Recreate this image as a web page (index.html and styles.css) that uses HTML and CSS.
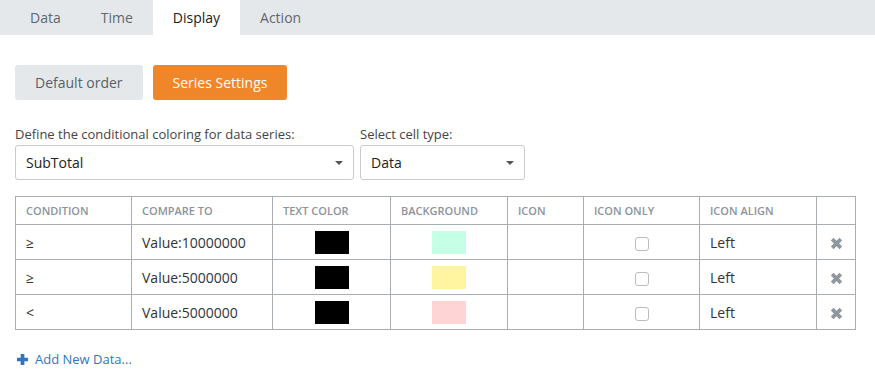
FILE: index.html
```html
<!DOCTYPE html>
<html>
<head>
<meta charset="utf-8">
<link rel="stylesheet" href="styles.css">
</head>
<body>
<div class="tabs">
  <div class="tab">Data</div>
  <div class="tab">Time</div>
  <div class="tab active">Display</div>
  <div class="tab">Action</div>
</div>
<div class="content">
  <div class="btns">
    <button class="btn">Default order</button>
    <button class="btn primary">Series Settings</button>
  </div>
  <div class="fields">
    <div class="field f1">
      <div class="label">Define the conditional coloring for data series:</div>
      <div class="select"><span>SubTotal</span><i class="caret"></i></div>
    </div>
    <div class="field f2">
      <div class="label">Select cell type:</div>
      <div class="select"><span>Data</span><i class="caret"></i></div>
    </div>
  </div>
  <table class="grid">
    <colgroup>
      <col style="width:116px"><col style="width:141px"><col style="width:118px"><col style="width:117px"><col style="width:76px"><col style="width:116px"><col style="width:117px"><col style="width:39px">
    </colgroup>
    <thead>
      <tr><th>Condition</th><th>Compare To</th><th>Text Color</th><th>Background</th><th>Icon</th><th>Icon Only</th><th>Icon Align</th><th></th></tr>
    </thead>
    <tbody>
      <tr><td>≥</td><td>Value:10000000</td><td class="c"><span class="sw black"></span></td><td class="c"><span class="sw mint"></span></td><td></td><td class="c"><span class="cb"></span></td><td>Left</td><td class="c"><svg class="x" viewBox="0 0 12 12" width="13" height="13"><path d="M2 2L10 10M10 2L2 10" stroke="#8e979f" stroke-width="3.4"/></svg></td></tr>
      <tr><td>≥</td><td>Value:5000000</td><td class="c"><span class="sw black"></span></td><td class="c"><span class="sw yellow"></span></td><td></td><td class="c"><span class="cb"></span></td><td>Left</td><td class="c"><svg class="x" viewBox="0 0 12 12" width="13" height="13"><path d="M2 2L10 10M10 2L2 10" stroke="#8e979f" stroke-width="3.4"/></svg></td></tr>
      <tr><td>&lt;</td><td>Value:5000000</td><td class="c"><span class="sw black"></span></td><td class="c"><span class="sw pink"></span></td><td></td><td class="c"><span class="cb"></span></td><td>Left</td><td class="c"><svg class="x" viewBox="0 0 12 12" width="13" height="13"><path d="M2 2L10 10M10 2L2 10" stroke="#8e979f" stroke-width="3.4"/></svg></td></tr>
    </tbody>
  </table>
  <div class="add">
    <svg viewBox="0 0 14 14" width="13" height="13"><path d="M7 1V13M1 7H13" stroke="#2f76c2" stroke-width="4"/></svg>
    <span>Add New Data...</span>
  </div>
</div>
</body>
</html>
```

FILE: styles.css
```css
* { box-sizing: border-box; }
body {
  margin: 0;
  font-family: "Open Sans", "Liberation Sans", sans-serif;
  color: #333;
  background: #fff;
  width: 875px;
  height: 379px;
  overflow: hidden;
}
.tabs {
  display: flex;
  height: 35px;
  background: #e5e8eb;
  padding-left: 10px;
}
.tab {
  padding: 0 20px;
  line-height: 35px;
  font-size: 14px;
  color: #5f6770;
}
.tab.active {
  background: #fff;
  color: #1a1a1a;
}
.content {
  padding: 30px 15px 0 15px;
}
.btns {
  display: flex;
  gap: 10px;
}
.btn {
  height: 35px;
  padding: 0 20px;
  border: none;
  border-radius: 3px;
  font-family: inherit;
  font-size: 14px;
  background: #e5e8eb;
  color: #5a5f66;
}
.btn.primary {
  background: #f0862a;
  color: #fff;
}
.fields {
  display: flex;
  gap: 6px;
  margin-top: 25px;
}
.label {
  font-size: 13px;
  color: #444;
  line-height: 18px;
  margin-bottom: 2px;
}
.f1 { width: 339px; }
.f2 { width: 165px; }
.select {
  height: 35px;
  border: 1px solid #c8cbcf;
  border-radius: 3px;
  display: flex;
  align-items: center;
  justify-content: space-between;
  padding: 0 10px 0 10px;
  font-size: 14px;
  color: #222;
}
.caret {
  width: 0;
  height: 0;
  border-left: 4px solid transparent;
  border-right: 4px solid transparent;
  border-top: 4px solid #555;
}
.grid {
  margin-top: 16px;
  border-collapse: collapse;
  table-layout: fixed;
  width: 840px;
}
.grid th, .grid td {
  border: 1px solid #a9aeb3;
  text-align: left;
  padding: 0 0 0 10px;
}
.grid th {
  height: 28px;
  font-size: 11px;
  font-weight: 600;
  text-transform: uppercase;
  color: #8b949c;
}
.grid td {
  height: 35px;
  font-size: 14px;
  color: #333;
}
.grid td.c {
  text-align: center;
  padding: 0;
}
.sw {
  display: inline-block;
  width: 34px;
  height: 23px;
  vertical-align: middle;
}
.black { background: #000; }
.mint { background: #c4ffe6; }
.yellow { background: #fff5a0; }
.pink { background: #ffd4d4; }
.cb {
  display: inline-block;
  width: 14px;
  height: 14px;
  border: 1px solid #b9bdc1;
  border-radius: 3px;
  vertical-align: middle;
}
.x { vertical-align: middle; }
.add {
  display: flex;
  align-items: center;
  gap: 6px;
  margin-top: 20px;
  padding-left: 1px;
  font-size: 13px;
  color: #2f76c2;
}
```
